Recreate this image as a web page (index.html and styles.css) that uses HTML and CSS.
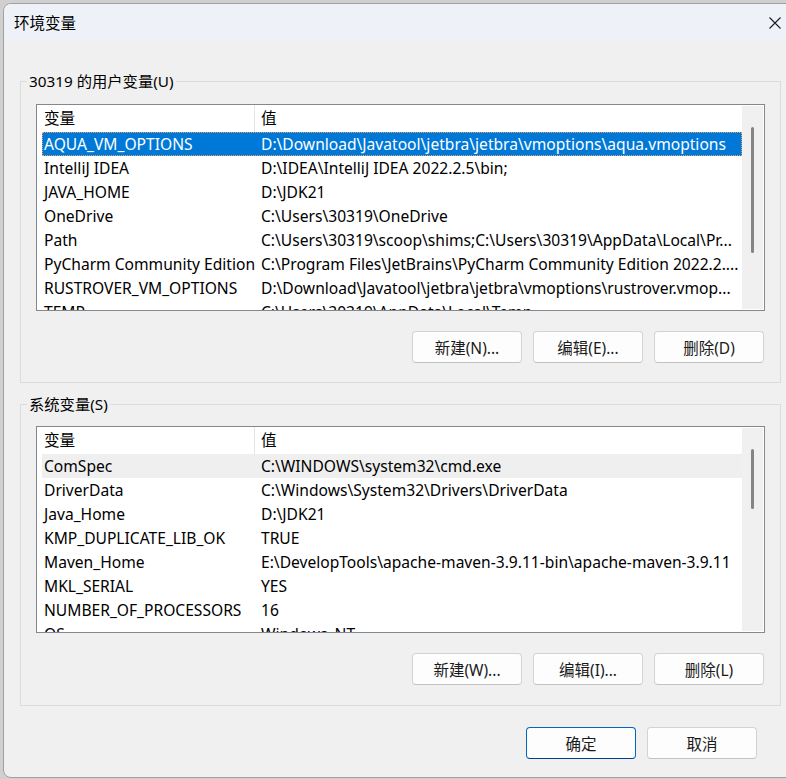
FILE: index.html
```html
<!DOCTYPE html>
<html lang="zh-CN">
<head>
    <meta charset="UTF-8">
    <title>环境变量</title>
    <link rel="stylesheet" href="styles.css">
</head>
<body>
    <div class="window">
        <div class="titlebar">
            <span class="title">环境变量</span>
            <div class="close">
                <svg width="12" height="12" viewBox="0 0 12 12">
                    <path d="M0.5 0.5 L11.5 11.5 M11.5 0.5 L0.5 11.5" stroke="#1b1b1b" stroke-width="1.1" fill="none"/>
                </svg>
            </div>
        </div>

        <div class="content">
            <fieldset class="group">
                <legend>30319 的用户变量(U)</legend>
                <div class="listview">
                    <div class="listbody">
                        <div class="header"><div class="c1">变量</div><div class="c2">值</div></div>
                        <div class="row selected"><div class="c1">AQUA_VM_OPTIONS</div><div class="c2">D:\Download\Javatool\jetbra\jetbra\vmoptions\aqua.vmoptions</div></div>
                        <div class="row"><div class="c1">IntelliJ IDEA</div><div class="c2">D:\IDEA\IntelliJ IDEA 2022.2.5\bin;</div></div>
                        <div class="row"><div class="c1">JAVA_HOME</div><div class="c2">D:\JDK21</div></div>
                        <div class="row"><div class="c1">OneDrive</div><div class="c2">C:\Users\30319\OneDrive</div></div>
                        <div class="row"><div class="c1">Path</div><div class="c2">C:\Users\30319\scoop\shims;C:\Users\30319\AppData\Local\Pr...</div></div>
                        <div class="row"><div class="c1">PyCharm Community Edition</div><div class="c2">C:\Program Files\JetBrains\PyCharm Community Edition 2022.2....</div></div>
                        <div class="row"><div class="c1">RUSTROVER_VM_OPTIONS</div><div class="c2">D:\Download\Javatool\jetbra\jetbra\vmoptions\rustrover.vmop...</div></div>
                        <div class="row"><div class="c1">TEMP</div><div class="c2">C:\Users\30319\AppData\Local\Temp</div></div>
                    </div>
                    <div class="scrollbar"><div class="thumb"></div></div>
                </div>
                <div class="actions">
                    <button>新建(N)...</button>
                    <button>编辑(E)...</button>
                    <button>删除(D)</button>
                </div>
            </fieldset>

            <fieldset class="group system">
                <legend>系统变量(S)</legend>
                <div class="listview">
                    <div class="listbody">
                        <div class="header"><div class="c1">变量</div><div class="c2">值</div></div>
                        <div class="row hover"><div class="c1">ComSpec</div><div class="c2">C:\WINDOWS\system32\cmd.exe</div></div>
                        <div class="row"><div class="c1">DriverData</div><div class="c2">C:\Windows\System32\Drivers\DriverData</div></div>
                        <div class="row"><div class="c1">Java_Home</div><div class="c2">D:\JDK21</div></div>
                        <div class="row"><div class="c1">KMP_DUPLICATE_LIB_OK</div><div class="c2">TRUE</div></div>
                        <div class="row"><div class="c1">Maven_Home</div><div class="c2">E:\DevelopTools\apache-maven-3.9.11-bin\apache-maven-3.9.11</div></div>
                        <div class="row"><div class="c1">MKL_SERIAL</div><div class="c2">YES</div></div>
                        <div class="row"><div class="c1">NUMBER_OF_PROCESSORS</div><div class="c2">16</div></div>
                        <div class="row"><div class="c1">OS</div><div class="c2">Windows_NT</div></div>
                    </div>
                    <div class="scrollbar"><div class="thumb short"></div></div>
                </div>
                <div class="actions">
                    <button>新建(W)...</button>
                    <button>编辑(I)...</button>
                    <button>删除(L)</button>
                </div>
            </fieldset>

            <div class="footer">
                <button class="primary">确定</button>
                <button>取消</button>
            </div>
        </div>
    </div>
</body>
</html>
```

FILE: styles.css
```css
body {
    margin: 0;
    background: #d0d0d0;
    overflow: hidden;
    font-family: "Noto Sans", "Noto Sans CJK SC", sans-serif;
    font-size: 15px;
    color: #000;
}
.window {
    margin: 3px 0 0 3px;
    width: 796px;
    height: 775px;
    box-sizing: border-box;
    border: 1px solid #a0a0a0;
    border-radius: 8px;
    background: #f0f0f0;
    overflow: hidden;
}
.titlebar {
    height: 37px;
    background: #eef2f8;
    display: flex;
    align-items: center;
    justify-content: space-between;
    padding-left: 10px;
}
.title {
    font-size: 15.5px;
}
.close {
    width: 46px;
    height: 37px;
    display: flex;
    align-items: center;
    justify-content: center;
}
.content {
    padding-left: 16px;
}
.group {
    width: 761px;
    min-width: 0;
    box-sizing: border-box;
    margin: 30px 0 0;
    padding: 13px 15px 19px;
    border: 1px solid #dcdcdc;
}
.group.system {
    margin-top: 11px;
    padding-top: 12px;
    padding-bottom: 20px;
}
legend {
    padding: 0 2px;
    margin-left: -9px;
    line-height: 20px;
    font-size: 15.3px;
}
.listview {
    display: flex;
    height: 207px;
    box-sizing: border-box;
    border: 1px solid #828790;
    background: #fff;
    font-size: 15.6px;
}
.listbody {
    flex: 1;
    overflow: hidden;
    padding-left: 5px;
}
.header, .row {
    display: flex;
    width: 700px;
    white-space: nowrap;
}
.header {
    height: 27px;
    line-height: 27px;
}
.header .c1 {
    border-right: 1px solid #e5e5e5;
}
.row {
    height: 24px;
    line-height: 24px;
}
.c1 {
    width: 213px;
    box-sizing: border-box;
    padding-left: 2px;
    overflow: hidden;
}
.c2 {
    flex: 1;
    padding-left: 6px;
    overflow: hidden;
}
.row.selected {
    background: #0078d7;
    color: #fff;
    outline: 1px dotted #f0a060;
    outline-offset: -1px;
}
.row.hover {
    background: #efefef;
}
.scrollbar {
    width: 21px;
    margin: 1px 1px 1px 0;
    background: #f0f0f0;
}
.thumb {
    width: 3px;
    height: 126px;
    margin: 21px 0 0 9px;
    border-radius: 2px;
    background: #858585;
}
.thumb.short {
    height: 60px;
}
.actions {
    display: flex;
    justify-content: flex-end;
    gap: 11px;
    margin-top: 20px;
    padding-right: 1px;
}
button {
    width: 110px;
    height: 32px;
    box-sizing: border-box;
    border: 1px solid #d3d3d3;
    border-bottom-color: #c2c2c2;
    border-radius: 4px;
    background: #fdfdfd;
    font-family: "Noto Sans", "Noto Sans CJK SC", sans-serif;
    font-size: 15.5px;
    color: #1a1a1a;
    padding: 0;
}
button.primary {
    border-color: #0067c0;
    border-bottom-color: #003e92;
}
.footer {
    display: flex;
    justify-content: flex-end;
    gap: 11px;
    width: 761px;
    box-sizing: border-box;
    padding-right: 24px;
    margin-top: 21px;
}
```
